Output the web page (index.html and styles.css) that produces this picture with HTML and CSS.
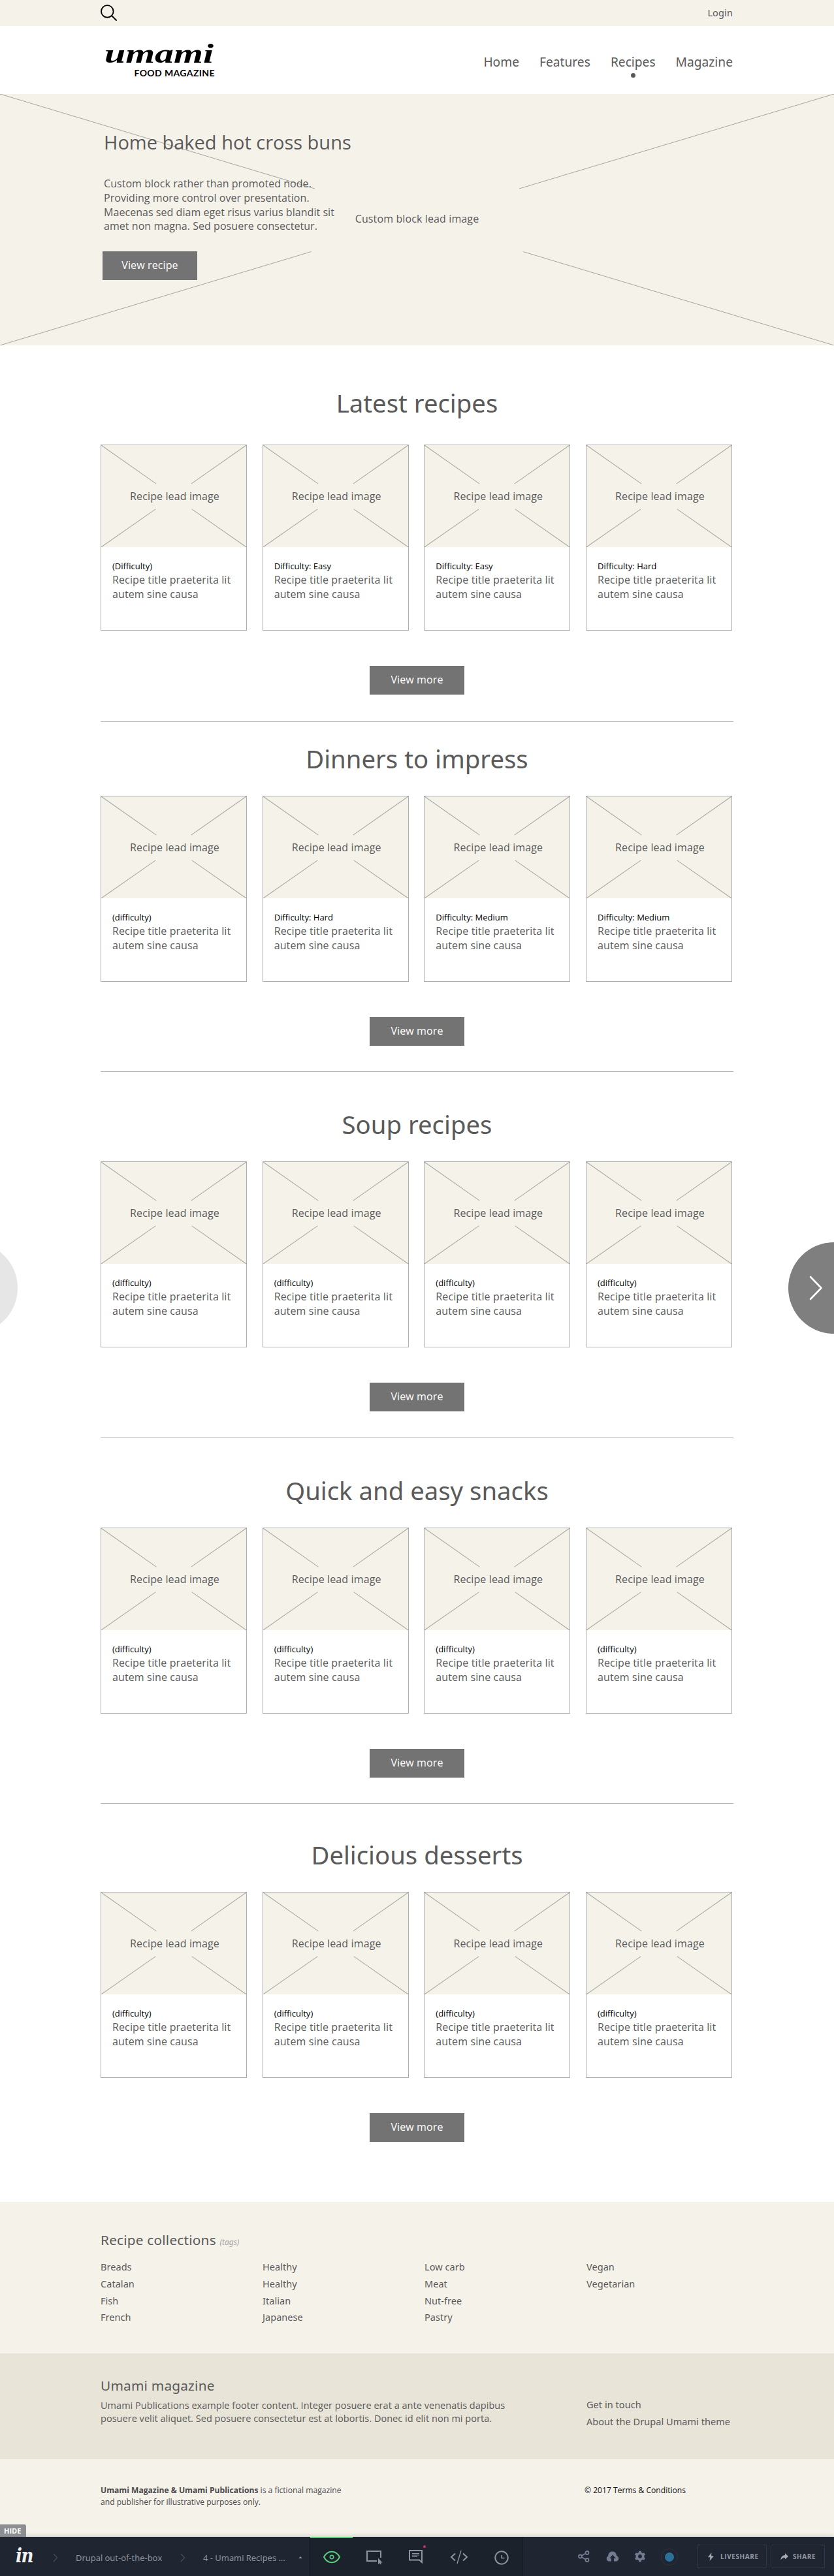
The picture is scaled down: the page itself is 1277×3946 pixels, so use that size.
FILE: index.html
```html
<!DOCTYPE html>
<html lang="en">
<head>
    <meta charset="UTF-8">
    <meta name="viewport" content="width=device-width, initial-scale=1.0">
    <title>Umami Food Magazine - Recipes</title>
    <link rel="stylesheet" href="styles.css">
</head>
<body>

    <!-- Shared placeholder cross for recipe images -->
    <svg class="defs" width="0" height="0">
        <symbol id="cross" viewBox="0 0 224 157" preserveAspectRatio="none">
            <path d="M0 0L85 59.5M224 0L139 59.5M0 157L84 98.5M224 157L140 98.5" fill="none" stroke="#a8a9a4" stroke-width="1.1"/>
        </symbol>
    </svg>

    <div class="page">

    <!-- Top bar -->
    <div class="topbar">
        <div class="container topbar-inner">
            <svg class="search" width="26" height="26" viewBox="0 0 26 26" fill="none" stroke="#000" stroke-width="1.9" stroke-linecap="round">
                <circle cx="10.3" cy="10.4" r="9.3"/>
                <path d="M17 17L24 24"/>
            </svg>
            <a href="#" class="login">Login</a>
        </div>
    </div>

    <!-- Header -->
    <header class="header">
        <div class="container header-inner">
            <svg class="logo" width="176" height="80" viewBox="0 0 176 80">
                <text class="logo-name" x="1" y="48" textLength="167" lengthAdjust="spacingAndGlyphs">umami</text>
                <text class="logo-sub" x="170" y="69" text-anchor="end">FOOD MAGAZINE</text>
            </svg>
            <nav class="nav">
                <a href="#">Home</a>
                <a href="#">Features</a>
                <a href="#" class="active">Recipes</a>
                <a href="#">Magazine</a>
            </nav>
        </div>
    </header>

    <!-- Hero -->
    <section class="hero">
        <svg class="hero-cross" viewBox="0 0 1277 385" preserveAspectRatio="none">
            <path d="M0 0L482 145M1277 0L795 145M0 385L476.5 241.5M1277 385L801 241.5" fill="none" stroke="#a5a6a1" stroke-width="1"/>
        </svg>
        <div class="hero-label">Custom block lead image</div>
        <div class="container hero-content">
            <h1>Home baked hot cross buns</h1>
            <p>Custom block rather than promoted node.<br>
            Providing more control over presentation.<br>
            Maecenas sed diam eget risus varius blandit sit<br>
            amet non magna. Sed posuere consectetur.</p>
            <a href="#" class="button">View recipe</a>
        </div>
    </section>

    <!-- Recipe lists -->
    <section class="container recipes latest">
        <h2>Latest recipes</h2>
        <div class="cards">
            <div class="card">
                <div class="thumb"><svg><use href="#cross"/></svg>Recipe lead image</div>
                <div class="difficulty">(Difficulty)</div>
                <h3>Recipe title praeterita lit autem sine causa</h3>
            </div>
            <div class="card">
                <div class="thumb"><svg><use href="#cross"/></svg>Recipe lead image</div>
                <div class="difficulty">Difficulty: Easy</div>
                <h3>Recipe title praeterita lit autem sine causa</h3>
            </div>
            <div class="card">
                <div class="thumb"><svg><use href="#cross"/></svg>Recipe lead image</div>
                <div class="difficulty">Difficulty: Easy</div>
                <h3>Recipe title praeterita lit autem sine causa</h3>
            </div>
            <div class="card">
                <div class="thumb"><svg><use href="#cross"/></svg>Recipe lead image</div>
                <div class="difficulty">Difficulty: Hard</div>
                <h3>Recipe title praeterita lit autem sine causa</h3>
            </div>
        </div>
        <a href="#" class="button">View more</a>
    </section>

    <section class="container recipes dinners">
        <h2>Dinners to impress</h2>
        <div class="cards">
            <div class="card">
                <div class="thumb"><svg><use href="#cross"/></svg>Recipe lead image</div>
                <div class="difficulty">(difficulty)</div>
                <h3>Recipe title praeterita lit autem sine causa</h3>
            </div>
            <div class="card">
                <div class="thumb"><svg><use href="#cross"/></svg>Recipe lead image</div>
                <div class="difficulty">Difficulty: Hard</div>
                <h3>Recipe title praeterita lit autem sine causa</h3>
            </div>
            <div class="card">
                <div class="thumb"><svg><use href="#cross"/></svg>Recipe lead image</div>
                <div class="difficulty">Difficulty: Medium</div>
                <h3>Recipe title praeterita lit autem sine causa</h3>
            </div>
            <div class="card">
                <div class="thumb"><svg><use href="#cross"/></svg>Recipe lead image</div>
                <div class="difficulty">Difficulty: Medium</div>
                <h3>Recipe title praeterita lit autem sine causa</h3>
            </div>
        </div>
        <a href="#" class="button">View more</a>
    </section>

    <section class="container recipes soups">
        <h2>Soup recipes</h2>
        <div class="cards">
            <div class="card">
                <div class="thumb"><svg><use href="#cross"/></svg>Recipe lead image</div>
                <div class="difficulty">(difficulty)</div>
                <h3>Recipe title praeterita lit autem sine causa</h3>
            </div>
            <div class="card">
                <div class="thumb"><svg><use href="#cross"/></svg>Recipe lead image</div>
                <div class="difficulty">(difficulty)</div>
                <h3>Recipe title praeterita lit autem sine causa</h3>
            </div>
            <div class="card">
                <div class="thumb"><svg><use href="#cross"/></svg>Recipe lead image</div>
                <div class="difficulty">(difficulty)</div>
                <h3>Recipe title praeterita lit autem sine causa</h3>
            </div>
            <div class="card">
                <div class="thumb"><svg><use href="#cross"/></svg>Recipe lead image</div>
                <div class="difficulty">(difficulty)</div>
                <h3>Recipe title praeterita lit autem sine causa</h3>
            </div>
        </div>
        <a href="#" class="button">View more</a>
    </section>

    <section class="container recipes snacks">
        <h2>Quick and easy snacks</h2>
        <div class="cards">
            <div class="card">
                <div class="thumb"><svg><use href="#cross"/></svg>Recipe lead image</div>
                <div class="difficulty">(difficulty)</div>
                <h3>Recipe title praeterita lit autem sine causa</h3>
            </div>
            <div class="card">
                <div class="thumb"><svg><use href="#cross"/></svg>Recipe lead image</div>
                <div class="difficulty">(difficulty)</div>
                <h3>Recipe title praeterita lit autem sine causa</h3>
            </div>
            <div class="card">
                <div class="thumb"><svg><use href="#cross"/></svg>Recipe lead image</div>
                <div class="difficulty">(difficulty)</div>
                <h3>Recipe title praeterita lit autem sine causa</h3>
            </div>
            <div class="card">
                <div class="thumb"><svg><use href="#cross"/></svg>Recipe lead image</div>
                <div class="difficulty">(difficulty)</div>
                <h3>Recipe title praeterita lit autem sine causa</h3>
            </div>
        </div>
        <a href="#" class="button">View more</a>
    </section>

    <section class="container recipes desserts">
        <h2>Delicious desserts</h2>
        <div class="cards">
            <div class="card">
                <div class="thumb"><svg><use href="#cross"/></svg>Recipe lead image</div>
                <div class="difficulty">(difficulty)</div>
                <h3>Recipe title praeterita lit autem sine causa</h3>
            </div>
            <div class="card">
                <div class="thumb"><svg><use href="#cross"/></svg>Recipe lead image</div>
                <div class="difficulty">(difficulty)</div>
                <h3>Recipe title praeterita lit autem sine causa</h3>
            </div>
            <div class="card">
                <div class="thumb"><svg><use href="#cross"/></svg>Recipe lead image</div>
                <div class="difficulty">(difficulty)</div>
                <h3>Recipe title praeterita lit autem sine causa</h3>
            </div>
            <div class="card">
                <div class="thumb"><svg><use href="#cross"/></svg>Recipe lead image</div>
                <div class="difficulty">(difficulty)</div>
                <h3>Recipe title praeterita lit autem sine causa</h3>
            </div>
        </div>
        <a href="#" class="button">View more</a>
    </section>

    <!-- Footer -->
    <footer>
        <div class="collections">
            <div class="container">
                <h4>Recipe collections <em>(tags)</em></h4>
                <div class="tags">
                    <ul><li>Breads</li><li>Catalan</li><li>Fish</li><li>French</li></ul>
                    <ul><li>Healthy</li><li>Healthy</li><li>Italian</li><li>Japanese</li></ul>
                    <ul><li>Low carb</li><li>Meat</li><li>Nut-free</li><li>Pastry</li></ul>
                    <ul><li>Vegan</li><li>Vegetarian</li></ul>
                </div>
            </div>
        </div>
        <div class="about">
            <div class="container about-inner">
                <div class="about-text">
                    <h4>Umami magazine</h4>
                    <p>Umami Publications example footer content. Integer posuere erat a ante venenatis dapibus<br>
                    posuere velit aliquet. Sed posuere consectetur est at lobortis. Donec id elit non mi porta.</p>
                </div>
                <ul class="about-links"><li>Get in touch</li><li>About the Drupal Umami theme</li></ul>
            </div>
        </div>
        <div class="legal">
            <div class="container legal-inner">
                <p><strong>Umami Magazine &amp; Umami Publications</strong> is a fictional magazine<br>
                and publisher for illustrative purposes only.</p>
                <div class="terms">© 2017 Terms &amp; Conditions</div>
            </div>
        </div>
    </footer>

    <!-- Prototype viewer arrows -->
    <div class="arrow arrow-prev"></div>
    <div class="arrow arrow-next">
        <svg width="22" height="38" viewBox="0 0 22 38" fill="none" stroke="#fff" stroke-width="2.6" stroke-linecap="round" stroke-linejoin="round">
            <path d="M2 2L18.5 19L2 36"/>
        </svg>
    </div>

    <!-- Prototype viewer toolbar -->
    <div class="toolbar">
        <span class="hide">HIDE</span>
        <div class="crumbs">
            <span class="in">in</span>
            <svg class="sep" width="8" height="14" viewBox="0 0 8 14"><path d="M1 1L6.500 7L1 13"/></svg>
            <span class="crumb project">Drupal out-of-the-box</span>
            <svg class="sep" width="8" height="14" viewBox="0 0 8 14"><path d="M1 1L6.500 7L1 13"/></svg>
            <span class="crumb screen">4 - Umami Recipes ...</span>
            <svg width="6" height="3" viewBox="0 0 6 3"><path d="M0 3L3 0L6 3Z" fill="#8e939f"/></svg>
        </div>
        <div class="modes">
            <span class="mode current">
                <svg width="28" height="20" viewBox="0 0 28 20" fill="none" stroke="#57cf7b" stroke-width="2">
                    <path d="M2 10C5 4 9 1.800 14 1.800S23 4 26 10C23 16 19 18.200 14 18.200S5 16 2 10Z"/>
                    <circle cx="14" cy="10" r="2.700" stroke-width="1.500"/>
                </svg>
            </span>
            <span class="mode">
                <svg width="26" height="24" viewBox="0 0 26 24" fill="none" stroke="#8e94a1" stroke-width="2">
                    <path d="M17 18H2V3H23V13"/>
                    <path d="M19 13.500V23L21.200 21L22.500 23.500L24 22.700L22.800 20.500H25.500Z" fill="#8e94a1" stroke="none"/>
                </svg>
            </span>
            <span class="mode">
                <svg width="28" height="30" viewBox="0 0 28 30" fill="none" stroke="#8e94a1" stroke-width="2">
                    <path d="M3 9H22V27L18 23.500H3Z"/>
                    <path d="M7 13.500H18M7 16H18M7 18.500H15" stroke-width="1.200"/>
                    <circle cx="26" cy="3" r="2" fill="#c8365f" stroke="none"/>
                </svg>
            </span>
            <span class="mode">
                <svg width="28" height="22" viewBox="0 0 28 22" fill="none" stroke="#8e94a1" stroke-width="2">
                    <path d="M8 5.500L2 11L8 16.500M20 5.500L26 11L20 16.500"/>
                    <path d="M17 1L11 21" stroke-width="1.400"/>
                </svg>
            </span>
            <span class="mode">
                <svg width="24" height="24" viewBox="0 0 24 24" fill="none" stroke="#8e94a1" stroke-width="2">
                    <circle cx="12" cy="12" r="9.700"/>
                    <path d="M12 8V12.500H16.500" stroke-width="1.500"/>
                </svg>
            </span>
        </div>
        <div class="tools">
            <svg width="18" height="18" viewBox="0 0 18 18" fill="none" stroke="#737b90" stroke-width="1.800">
                <path d="M5.500 8L11.500 4.500M5.500 10L11.500 13.500"/>
                <circle cx="3.500" cy="9" r="2.500"/><circle cx="14" cy="3.500" r="2.500"/><circle cx="14" cy="14.500" r="2.500"/>
            </svg>
            <svg class="cloud" width="20" height="16" viewBox="0 0 20 16" fill="#737b90">
                <path d="M8 15.500H4.500A4.200 4.200 0 0 1 3.300 7.500C3.200 3.500 5.500 1 9 .500C13 .200 16 3 16 6.800C18 7.500 19.300 9.200 19.300 11.200C19.300 13.700 17.500 15.500 15 15.500H12V11H15L10 5.500L5.500 11H8Z"/>
            </svg>
            <svg class="gear" width="18" height="18" viewBox="0 0 18 18">
                <circle cx="9" cy="9" r="4.700" fill="none" stroke="#737b90" stroke-width="3.600"/>
                <path d="M9 .800V4M9 14V17.200M1.900 4.900L4.700 6.500M13.300 11.500L16.100 13.100M1.900 13.100L4.700 11.500M13.300 6.500L16.100 4.900" stroke="#737b90" stroke-width="3.800"/>
            </svg>
            <span class="status"></span>
            <a href="#" class="tool-button liveshare">
                <svg width="9" height="13" viewBox="0 0 9 13" fill="#a3a8b4"><path d="M5.500 0L0 7.200H3.500L2.500 13L9 5.300H5Z"/></svg>
                LIVESHARE
            </a>
            <a href="#" class="tool-button share">
                <svg width="12" height="11" viewBox="0 0 12 11" fill="#a3a8b4"><path d="M7 0L12 5L7 9.500V7C4 6.800 2 8 .300 10.500C.500 6 3 3.300 7 3Z"/></svg>
                SHARE
            </a>
        </div>
    </div>

    </div>

</body>
</html>
```
FILE: styles.css
```css
* {
    box-sizing: border-box;
}

body {
    margin: 0;
    font-family: "Open Sans", sans-serif;
    font-size: 16px;
    letter-spacing: 0.12px;
    color: #5a5a5a;
    background: #fff;
}

a {
    color: inherit;
    text-decoration: none;
}

ul {
    list-style: none;
    margin: 0;
    padding: 0;
}

h1, h2, h3, h4, p {
    margin: 0;
    font-weight: normal;
}

.defs {
    display: block;
}

.page {
    position: relative;
    overflow: hidden;
}

.container {
    width: 969px;
    margin: 0 auto;
}

/* Top bar */
.topbar {
    height: 40px;
    background: #f5f2ea;
}

.topbar-inner {
    display: flex;
    justify-content: space-between;
    align-items: flex-start;
}

.search {
    margin-top: 7px;
}

.login {
    margin: 9px 1px 0 0;
    font: 14.5px/20px "Noto Sans", sans-serif;
}

/* Header */
.header {
    height: 104px;
}

.header-inner {
    display: flex;
    justify-content: space-between;
}

.logo {
    margin: 8px 0 0 5px;
}

.logo-name {
    font: italic bold 43px "Liberation Serif", serif;
    letter-spacing: 0;
    fill: #000;
}

.logo-sub {
    font: bold 14px "Lato", sans-serif;
    letter-spacing: 0.4px;
    fill: #000;
}

.nav {
    display: flex;
    gap: 31px;
    margin: 43px 1px 0 0;
    font: 19.2px/24px "Noto Sans", sans-serif;
    letter-spacing: 0;
}

.nav .active {
    position: relative;
}

.nav .active::after {
    content: "";
    position: absolute;
    left: 50%;
    top: 29px;
    width: 7px;
    height: 7px;
    margin-left: -3px;
    border-radius: 50%;
    background: #5a5a5a;
}

/* Hero */
.hero {
    position: relative;
    height: 385px;
    background: #f5f2ea;
}

.hero-cross {
    position: absolute;
    left: 0;
    top: 0;
    width: 100%;
    height: 100%;
}

.hero-label {
    position: absolute;
    top: 180px;
    left: 0;
    width: 100%;
    line-height: 22px;
    text-align: center;
}

.hero-content {
    position: relative;
    padding: 54px 0 0 3px;
}

.hero h1 {
    margin-left: 2px;
    font-size: 29px;
    line-height: 40px;
    letter-spacing: 0;
}

.hero p {
    margin: 33px 0 27px 2px;
    line-height: 21.8px;
    letter-spacing: 0.05px;
}

.button {
    display: block;
    width: 145px;
    height: 44px;
    line-height: 43px;
    background: #737373;
    color: #fff;
    text-align: center;
}

/* Recipe lists */
.recipes {
    height: 560px;
    padding-top: 57px;
    border-bottom: 1px solid #b5b5b5;
}

.recipes h2 {
    height: 50px;
    margin-bottom: 30px;
    font: 38.3px/46px "Noto Sans", sans-serif;
    letter-spacing: 0;
    text-align: center;
}

.recipes .button {
    margin: 54px auto 0;
}

.latest {
    height: 577px;
    padding-top: 65px;
}

.latest h2 {
    margin-bottom: 37px;
}

.dinners {
    height: 536px;
    padding-top: 33px;
}

.snacks {
    height: 561px;
    padding-top: 58px;
}

.desserts {
    height: 610px;
    padding-top: 55px;
    border-bottom: 0;
}

.cards {
    display: grid;
    grid-template-columns: repeat(4, 224px);
    justify-content: space-between;
    width: 967px;
}

.card {
    height: 285px;
    border: 1px solid #adadad;
}

.thumb {
    position: relative;
    display: flex;
    align-items: center;
    justify-content: center;
    height: 156px;
    padding-left: 3px;
    background: #f5f2ea;
}

.thumb svg {
    position: absolute;
    left: 0;
    top: 0;
    width: 100%;
    height: 100%;
}

.difficulty {
    padding: 19px 0 0 17px;
    font-size: 13px;
    line-height: 20px;
    letter-spacing: 0;
    color: #000;
}

.card h3 {
    padding: 0 20px 0 17px;
    font-size: 16px;
    line-height: 22px;
}

/* Footer */
footer h4 {
    font: 20.8px/28px "Noto Sans", sans-serif;
    letter-spacing: 0.2px;
}

footer h4 em {
    font-size: 12px;
    letter-spacing: 0;
    color: #a5a5a5;
}

footer ul {
    font: 14.5px/25.8px "Noto Sans", sans-serif;
    letter-spacing: 0.05px;
}

.collections {
    height: 232px;
    padding-top: 44px;
    background: #f5f2ea;
}

.tags {
    display: grid;
    grid-template-columns: repeat(4, 248px);
    margin-top: 11px;
}

.about {
    height: 162px;
    padding-top: 35px;
    background: #e8e4d8;
}

.about-inner,
.legal-inner {
    display: grid;
    grid-template-columns: 744px auto;
}

.about p {
    margin-top: 7px;
    font-size: 14.5px;
    line-height: 19.6px;
    letter-spacing: 0.03px;
}

.about-links {
    margin-top: 31px;
}

.legal {
    height: 119px;
    padding-top: 39px;
    background: #f5f2ea;
    font-size: 12.1px;
    line-height: 18px;
    letter-spacing: 0;
    color: #4a4a4a;
}

.legal-inner {
    grid-template-columns: 741px auto;
}

.terms {
    color: #111;
}

/* Prototype viewer arrows */
.arrow {
    position: absolute;
    top: 1903px;
    width: 140px;
    height: 140px;
    border-radius: 50%;
}

.arrow-prev {
    left: -113px;
    background: #e6e6e6;
}

.arrow-next {
    right: -70px;
    padding: 51px 0 0 32px;
    background: #7f7f7f;
}

/* Prototype viewer toolbar */
.toolbar {
    position: relative;
    display: flex;
    height: 60px;
    background: #202532;
    color: #9398a5;
    font-size: 13px;
    letter-spacing: 0;
    box-shadow: 0 0 8px rgba(0, 0, 0, 0.18);
}

.hide {
    position: absolute;
    left: 0;
    top: -19px;
    width: 40px;
    height: 19px;
    padding-left: 6px;
    border-radius: 0 3px 0 0;
    background: #8c8f92;
    color: #fff;
    font-size: 11px;
    font-weight: bold;
    line-height: 20px;
}

.crumbs {
    display: flex;
    align-items: center;
    width: 475px;
    padding: 3px 0 0 24px;
    border-right: 1px solid #171b25;
}

.in {
    width: 57px;
    margin-top: -6px;
    font: italic bold 29px/40px "DejaVu Serif Condensed", serif;
    letter-spacing: -1.5px;
    color: #f0f0f0;
}

.sep {
    fill: none;
    stroke: #454b5a;
    stroke-width: 1.3;
}

.crumb {
    flex: none;
    white-space: nowrap;
}

.project {
    width: 160px;
    padding-left: 27px;
    margin-right: 27px;
}

.screen {
    width: 146px;
    margin-left: 27px;
}

.modes {
    display: flex;
    width: 326px;
    background: #1c222c;
    border-right: 1px solid #171b25;
}

.mode {
    display: flex;
    align-items: center;
    justify-content: center;
    width: 65px;
    padding-top: 2px;
}

.current {
    border-top: 2px solid #57cf7b;
    padding-top: 0;
}

.mode:nth-child(3) {
    padding-bottom: 8px;
}

.mode:nth-child(5) {
    padding-top: 4px;
}

.tools {
    display: flex;
    align-items: center;
    flex: 1;
    padding-left: 84px;
}

.cloud {
    margin-left: 25px;
}

.gear {
    margin-left: 23px;
}

.status {
    width: 26px;
    height: 26px;
    margin: 2px 29px 0 23px;
    border: 1px solid #2d3342;
    border-radius: 50%;
    background: radial-gradient(circle, #2b7099 6.5px, transparent 7.2px);
}

.tool-button {
    display: flex;
    align-items: center;
    height: 36px;
    border: 1px solid #31384a;
    border-radius: 2px;
    font-size: 10px;
    font-weight: bold;
    letter-spacing: 0.6px;
}

.liveshare {
    width: 107px;
    gap: 10px;
    padding-left: 16px;
}

.share {
    width: 83px;
    gap: 7px;
    margin-left: 6px;
    padding-left: 14px;
}
```
